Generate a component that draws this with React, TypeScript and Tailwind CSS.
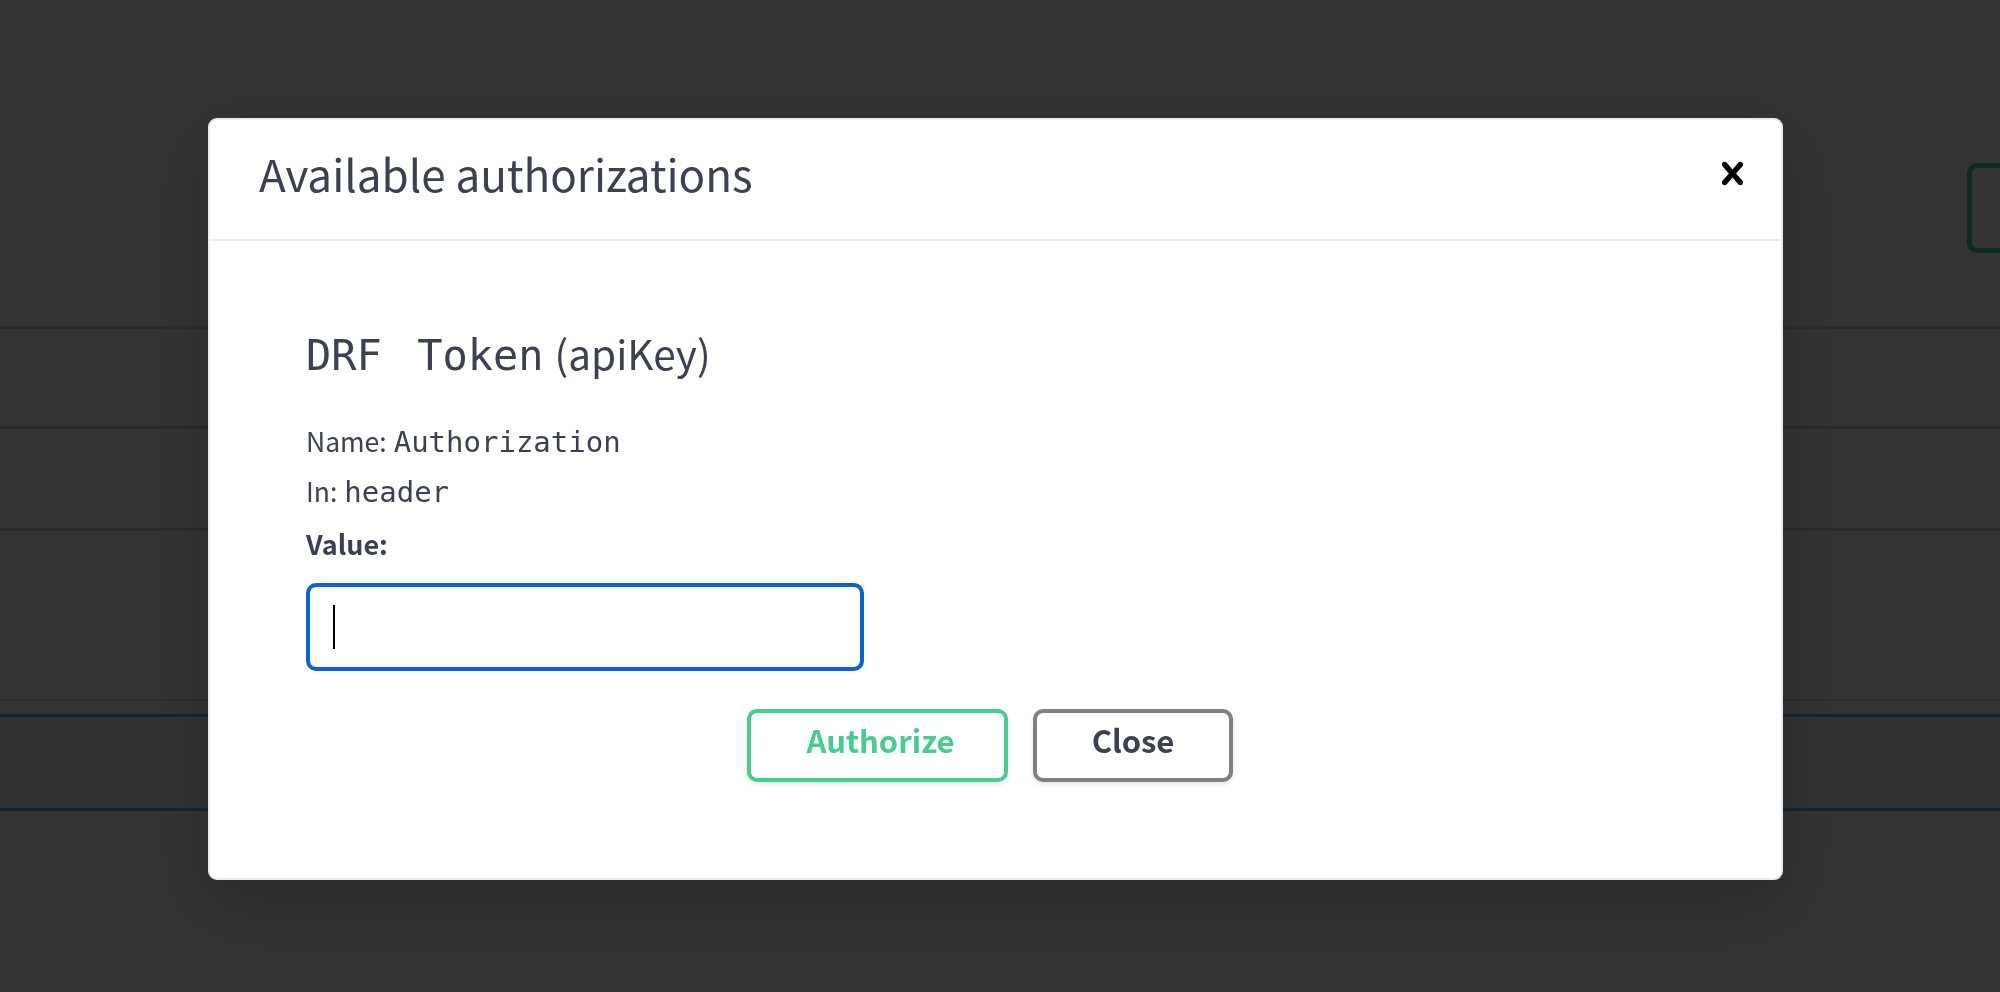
import React from 'react';

const sans = { fontFamily: '"Noto Sans CJK KR", "Noto Sans", sans-serif' };
const mono = { fontFamily: '"DejaVu Sans Mono", "Liberation Mono", monospace' };

function PageBehind() {
  // swagger page underneath the backdrop
  return (
    <div className="h-[992px] w-full overflow-hidden bg-white">
      <div className="flex h-[326px] justify-end pt-[163px]">
        <div className="-mr-[27px] h-[90px] w-[60px] rounded-[10px] border-[5px] border-[#49cc90]" />
      </div>
      <div className="h-[100px] border-t-[3px] border-[#d2d3d6]" />
      <div className="h-[102px] border-t-[3px] border-[#d2d3d6]" />
      <div className="h-[171px] border-t-[3px] border-[#d2d3d6]" />
      <div className="h-[15px] border-t-2 border-[#dadbdd]" />
      <div className="h-[97px] border-y-[3px] border-[#61affe] bg-[#eff7ff]" />
    </div>
  );
}

function CloseIcon() {
  return (
    <svg width="45" height="45" viewBox="0 0 20 20" aria-hidden="true">
      <path
        fill="#000"
        d="M14.348 14.849c-.469.469-1.229.469-1.697 0L10 11.819l-2.651 3.029c-.469.469-1.229.469-1.697 0-.469-.469-.469-1.229 0-1.697l2.758-3.15-2.759-3.152c-.469-.469-.469-1.228 0-1.697.469-.469 1.228-.469 1.697 0L10 8.183l2.651-3.031c.469-.469 1.228-.469 1.697 0 .469.469.469 1.229 0 1.697l-2.758 3.152 2.758 3.15c.469.469.469 1.229 0 1.698z"
      />
    </svg>
  );
}

function AuthModal() {
  return (
    <div
      className="w-[1575px] rounded-[9px] border-2 border-[#ebebeb] bg-white text-[#3b4151] shadow-[0_23px_69px_rgba(0,0,0,0.2)]"
      style={sans}
    >
      <div className="flex h-[121px] items-start justify-between border-b-2 border-[#ebebeb] pl-[49px] pr-[26px] pt-[30px]">
        <h3 className="text-[44px] leading-[46px] font-normal">Available authorizations</h3>
        <button className="mt-[1px]">
          <CloseIcon />
        </button>
      </div>

      <div className="pt-[87px] pb-[96px]">
        <div className="pl-[96px]">
          <h4 className="flex items-baseline text-[42px] leading-[50px] font-normal">
            <code className="[word-spacing:10px]" style={mono}>DRF Token</code>
            <span className="ml-[11px] text-[40.5px]">(apiKey)</span>
          </h4>

          <div className="mt-[40px] flex h-[50px] items-baseline text-[26.5px] leading-[40px]">
            <span>Name:</span>
            <code className="ml-[7px] text-[29px]" style={mono}>Authorization</code>
          </div>
          <div className="flex h-[53px] items-baseline text-[26.5px] leading-[40px]">
            <span>In:</span>
            <code className="ml-[7px] text-[29px]" style={mono}>header</code>
          </div>
          <div className="h-[40px] text-[27px] leading-[40px] font-bold">Value:</div>

          <div className="mt-[19px] flex h-[88px] w-[558px] items-center rounded-[10px] border-4 border-[#0c62cf] bg-white pl-[23px]">
            <div className="h-[44px] w-[2px] bg-black" />
          </div>
        </div>

        <div className="mt-[38px] flex justify-center gap-[25px] pr-[11px]">
          <button className="flex h-[73px] w-[261px] items-center justify-center rounded-[10px] border-4 border-[#49cc90] bg-white pb-[10px] pl-[6px] text-[31px] font-bold text-[#49cc90] shadow-[0_2px_5px_rgba(0,0,0,0.1)]">
            Authorize
          </button>
          <button className="flex h-[73px] w-[200px] items-center justify-center rounded-[10px] border-4 border-[#808080] bg-white pb-[10px] text-[31px] font-bold text-[#3b4151] shadow-[0_2px_5px_rgba(0,0,0,0.1)]">
            Close
          </button>
        </div>
      </div>
    </div>
  );
}

export default function App() {
  return (
    <div className="relative h-[992px] w-full overflow-hidden">
      <PageBehind />
      <div className="fixed inset-0 flex items-start justify-center bg-black/80 pr-[9px] pt-[118px]">
        <AuthModal />
      </div>
    </div>
  );
}
